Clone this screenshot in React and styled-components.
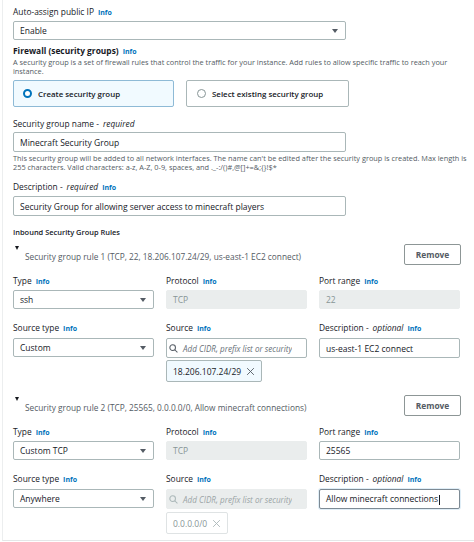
import React from "react";
import styled, { createGlobalStyle } from "styled-components";

const Global = createGlobalStyle`
  html, body { margin: 0; padding: 0; background: #fff; }
  body { font-family: "Open Sans", "Noto Sans", sans-serif; color: #16191f; }
  * { box-sizing: border-box; }
`;

const Page = styled.div`
  width: 472px;
  height: 541px;
  margin-left: 2px;
  border-left: 1px solid #eceeef;
  border-bottom: 1px solid #e4e7e8;
  padding: 6px 13px 0 10px;
  overflow: hidden;
`;

const Label = styled.div`
  display: flex;
  align-items: baseline;
  gap: 4px;
  height: 12px;
  line-height: 12px;
  font-size: 8.4px;
  font-weight: ${(p) => (p.$bold ? 700 : 500)};
  margin-top: ${(p) => p.$mt || 0}px;
  margin-bottom: ${(p) => p.$mb || 0}px;
  white-space: nowrap;
  em { font-style: italic; font-weight: 400; }
`;

const Info = styled.span`
  font-size: 7px;
  font-weight: 700;
  color: #0073bb;
`;

const Help = styled.div`
  font-size: 7.35px;
  line-height: 9px;
  color: #545b64;
  margin-top: ${(p) => p.$mt || 0}px;
  width: 456px;
`;

const Box = styled.div`
  display: flex;
  align-items: center;
  justify-content: space-between;
  width: ${(p) => (p.$w ? `${p.$w}px` : "100%")};
  height: ${(p) => p.$h || 20}px;
  margin-top: ${(p) => p.$mt || 0}px;
  padding: 0 ${(p) => p.$pr || 7}px 0 ${(p) => p.$pl || 6}px;
  border: 1px solid ${(p) => (p.$disabled ? "#eaeded" : p.$focus ? "#7d8a94" : "#aab7b8")};
  border-radius: 2px;
  background: ${(p) => (p.$disabled ? "#eaeded" : "#fff")};
  box-shadow: ${(p) => (p.$focus ? "0 0 0 1px rgba(0,115,187,0.12)" : "none")};
  font-size: 8.5px;
  font-weight: ${(p) => (p.$strong ? 500 : 400)};
  color: ${(p) => (p.$disabled ? "#879596" : "#16191f")};
  white-space: nowrap;
  overflow: hidden;
`;

const Caret = styled.span`
  width: 0;
  height: 0;
  border-left: 3px solid transparent;
  border-right: 3px solid transparent;
  border-top: 4px solid #545b64;
  flex: none;
`;

const RadioRow = styled.div`
  display: grid;
  grid-template-columns: 161px 163px;
  gap: 12px;
  margin-top: 4px;
`;

const RadioCard = styled.div`
  display: flex;
  align-items: center;
  gap: 6px;
  height: 27px;
  padding-left: ${(p) => (p.$checked ? 9 : 10)}px;
  border: 1px solid ${(p) => (p.$checked ? "#8ebad6" : "#aab7b8")};
  border-radius: 2px;
  background: ${(p) => (p.$checked ? "#f1faff" : "#fff")};
  font-size: 7.9px;
  font-weight: 600;
`;

const Radio = styled.span`
  width: 9px;
  height: 9px;
  border-radius: 50%;
  flex: none;
  border: ${(p) => (p.$checked ? "2.5px solid #0073bb" : "1px solid #879596")};
  background: #fff;
`;

const Heading = styled.div`
  margin-top: 10px;
  height: 12px;
  line-height: 12px;
  font-size: 7.45px;
  font-weight: 600;
`;

const RuleWrap = styled.div`
  margin-top: ${(p) => p.$mt}px;
`;

const RuleHeader = styled.div`
  display: flex;
  align-items: center;
  justify-content: space-between;
  height: 21px;
`;

const RuleTitle = styled.div`
  display: flex;
  align-items: flex-start;
  gap: 6px;
  font-size: 8.3px;
  color: #545b64;
  padding-left: 2px;
  span.t { line-height: 12px; margin-top: 5px; }
`;

const SmallCaret = styled.span`
  width: 0;
  height: 0;
  border-left: 2.5px solid transparent;
  border-right: 2.5px solid transparent;
  border-top: 4px solid #16191f;
`;

const Button = styled.div`
  width: 57px;
  height: 21px;
  display: flex;
  align-items: center;
  justify-content: center;
  border: 1px solid #8d9696;
  border-radius: 2px;
  font-size: 8.4px;
  font-weight: 700;
  color: #545b64;
`;

const Grid = styled.div`
  display: grid;
  grid-template-columns: 141px 141px 141px;
  column-gap: 12px;
  row-gap: 13px;
  margin-top: 10px;
`;

const Field = styled.div`
  display: flex;
  flex-direction: column;
  align-items: flex-start;
`;

const SearchText = styled.span`
  display: flex;
  align-items: center;
  gap: 5px;
  font-size: 8.1px;
  font-style: italic;
  color: ${(p) => (p.$disabled ? "#9aa4a6" : "#687078")};
  overflow: hidden;
  svg { flex: none; }
`;

const Token = styled.div`
  display: flex;
  align-items: center;
  gap: 5px;
  margin-top: ${(p) => p.$mt}px;
  height: 22px;
  padding: 0 6px;
  border: 1px solid ${(p) => (p.$disabled ? "#dfe3e4" : "#aab7b8")};
  border-radius: 2px;
  background: ${(p) => (p.$disabled ? "#fff" : "#f1faff")};
  font-size: 8.5px;
  font-weight: ${(p) => (p.$disabled ? 400 : 500)};
  color: ${(p) => (p.$disabled ? "#879596" : "#16191f")};
  svg { flex: none; }
`;

const Cursor = styled.span`
  display: inline-block;
  width: 1px;
  height: 10px;
  background: #16191f;
  margin-left: 1px;
  vertical-align: middle;
`;

const Search = ({ color }) => (
  <svg width="9" height="9" viewBox="0 0 16 16" fill="none" stroke={color} strokeWidth="1.8">
    <circle cx="6.5" cy="6.5" r="5" />
    <path d="M10.2 10.2 L15 15" />
  </svg>
);

const XIcon = ({ color }) => (
  <svg width="9" height="9" viewBox="0 0 16 16" fill="none" stroke={color} strokeWidth="1.6">
    <path d="M2 2 L14 14 M14 2 L2 14" />
  </svg>
);

const Rule = ({ mt, title, type, protocol, port, portDisabled, sourceType, searchDisabled, token, tokenDisabled, desc, focus }) => (
  <RuleWrap $mt={mt}>
    <RuleHeader>
      <RuleTitle>
        <SmallCaret />
        <span className="t">{title}</span>
      </RuleTitle>
      <Button>Remove</Button>
    </RuleHeader>
    <Grid>
      <Field>
        <Label $mb={3}>Type <Info>Info</Info></Label>
        <Box $h={19}>{type}<Caret /></Box>
      </Field>
      <Field>
        <Label $mb={3}>Protocol <Info>Info</Info></Label>
        <Box $h={19} $disabled>{protocol}</Box>
      </Field>
      <Field>
        <Label $mb={3}>Port range <Info>Info</Info></Label>
        <Box $h={19} $disabled={portDisabled} $strong={!portDisabled}>{port}</Box>
      </Field>
      <Field>
        <Label $mb={4}>Source type <Info>Info</Info></Label>
        <Box $h={19}>{sourceType}<Caret /></Box>
      </Field>
      <Field>
        <Label $mb={4}>Source <Info>Info</Info></Label>
        <Box $disabled={searchDisabled} $pl={2} $pr={2}>
          <SearchText $disabled={searchDisabled}>
            <Search color={searchDisabled ? "#aab7b8" : "#545b64"} />
            Add CIDR, prefix list or security
          </SearchText>
        </Box>
        <Token $mt={tokenDisabled ? 3 : 2} $disabled={tokenDisabled}>
          {token}
          <XIcon color={tokenDisabled ? "#aab7b8" : "#545b64"} />
        </Token>
      </Field>
      <Field>
        <Label $mb={4}>Description - <em>optional</em> <Info>Info</Info></Label>
        <Box $strong $focus={focus}>
          <span>{desc}{focus && <Cursor />}</span>
        </Box>
      </Field>
    </Grid>
  </RuleWrap>
);

export default function App() {
  return (
    <Page>
      <Global />
      <Label>Auto-assign public IP <Info>Info</Info></Label>
      <Box $w={333} $h={19} $mt={3}>Enable<Caret /></Box>

      <Label $bold $mt={5}>Firewall (security groups) <Info>Info</Info></Label>
      <Help $mt={1}>
        A security group is a set of firewall rules that control the traffic for your instance. Add rules to allow specific traffic to reach your instance.
      </Help>
      <RadioRow>
        <RadioCard $checked><Radio $checked />Create security group</RadioCard>
        <RadioCard><Radio />Select existing security group</RadioCard>
      </RadioRow>

      <Label $mt={11}>Security group name - <em>required</em></Label>
      <Box $w={333} $mt={2} $strong>Minecraft Security Group</Box>
      <Help $mt={2}>
        {"This security group will be added to all network interfaces. The name can't be edited after the security group is created. Max length is 255 characters. Valid characters: a-z, A-Z, 0-9, spaces, and ._-:/()#,@[]+=&;{}!$*"}
      </Help>

      <Label $mt={9}>Description - <em>required</em> <Info>Info</Info></Label>
      <Box $w={333} $mt={3} $strong>Security Group for allowing server access to minecraft players</Box>

      <Heading>Inbound Security Group Rules</Heading>

      <Rule
        mt={6}
        title="Security group rule 1 (TCP, 22, 18.206.107.24/29, us-east-1 EC2 connect)"
        type="ssh"
        protocol="TCP"
        port="22"
        portDisabled
        sourceType="Custom"
        token="18.206.107.24/29"
        desc="us-east-1 EC2 connect"
      />
      <Rule
        mt={13}
        title="Security group rule 2 (TCP, 25565, 0.0.0.0/0, Allow minecraft connections)"
        type="Custom TCP"
        protocol="TCP"
        port="25565"
        sourceType="Anywhere"
        searchDisabled
        token="0.0.0.0/0"
        tokenDisabled
        desc="Allow minecraft connections"
        focus
      />
    </Page>
  );
}
